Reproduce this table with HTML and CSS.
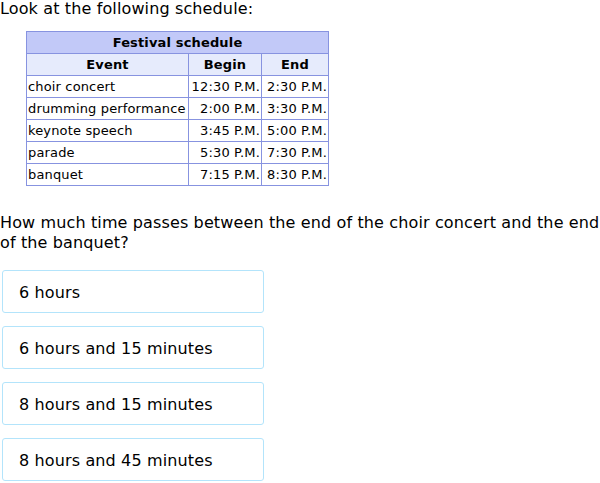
FILE: index.html
```html
<!DOCTYPE html>
<html>
<head>
<meta charset="utf-8">
<link rel="stylesheet" href="styles.css">
</head>
<body>
<div class="page">
  <p class="intro">Look at the following schedule:</p>
  <table class="sched">
    <colgroup><col class="c1"><col class="c2"><col class="c3"></colgroup>
    <tr><th class="title" colspan="3">Festival schedule</th></tr>
    <tr class="head"><th>Event</th><th>Begin</th><th>End</th></tr>
    <tr><td>choir concert</td><td class="t">12:30 P.M.</td><td class="t">2:30 P.M.</td></tr>
    <tr><td>drumming performance</td><td class="t">2:00 P.M.</td><td class="t">3:30 P.M.</td></tr>
    <tr><td>keynote speech</td><td class="t">3:45 P.M.</td><td class="t">5:00 P.M.</td></tr>
    <tr><td>parade</td><td class="t">5:30 P.M.</td><td class="t">7:30 P.M.</td></tr>
    <tr><td>banquet</td><td class="t">7:15 P.M.</td><td class="t">8:30 P.M.</td></tr>
  </table>
  <p class="question">How much time passes between the end of the choir concert and the end of the banquet?</p>
  <div class="options">
    <div class="opt">6 hours</div>
    <div class="opt">6 hours and 15 minutes</div>
    <div class="opt">8 hours and 15 minutes</div>
    <div class="opt">8 hours and 45 minutes</div>
  </div>
</div>
</body>
</html>
```
FILE: styles.css
```css
html, body { margin: 0; padding: 0; background: #fff; }
body { font-family: "DejaVu Sans", Verdana, sans-serif; color: #000; }
.intro { margin: 0; font-size: 16px; line-height: 18px; letter-spacing: 0.13px; }
.sched {
  border-collapse: collapse;
  table-layout: fixed;
  width: 302px;
  margin: 13px 0 0 26px;
  font-size: 13px;
  line-height: 15px;
  letter-spacing: 0.15px;
}
.sched .c1 { width: 162px; }
.sched .c2 { width: 73px; }
.sched .c3 { width: 67px; }
.sched th, .sched td {
  border: 1px solid #8793e0;
  padding: 3px 1px 3px 1px;
  height: 15px;
  white-space: nowrap;
}
.sched th.title { background: #c2c9f8; text-align: center; }
.sched tr.head th { background: #e6ebfc; }
.sched td.t { text-align: right; padding-right: 1px; }
.question { margin: 27px 0 0 0; font-size: 16px; line-height: 20px; letter-spacing: 0.13px; }
.options { display: flex; flex-direction: column; gap: 13px; margin-top: 17px; padding-left: 2px; }
.opt {
  box-sizing: border-box;
  width: 262px;
  height: 43px;
  border: 1px solid #b3e4fb;
  border-radius: 3px;
  font-size: 16px;
  line-height: 41px;
  padding: 1px 0 0 16px;
  letter-spacing: 0.13px;
}
```
